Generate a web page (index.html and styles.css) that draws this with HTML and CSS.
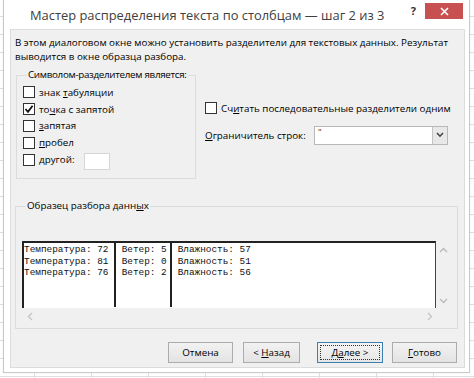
FILE: index.html
```html
<!DOCTYPE html>
<html lang="ru">
<head>
<meta charset="utf-8">
<title>Мастер распределения текста по столбцам</title>
<link rel="stylesheet" href="styles.css">
</head>
<body>
<div class="dialog">
  <div class="titlebar">
    <div class="title">Мастер распределения текста по столбцам — шаг 2 из 3</div>
    <div class="help">?</div>
    <div class="close">
      <svg width="9" height="9" viewBox="0 0 9 9"><path d="M1 1 L8 8 M8 1 L1 8" stroke="#fff" stroke-width="1.6" fill="none"/></svg>
    </div>
  </div>
  <div class="panel">
    <p class="desc">В этом диалоговом окне можно установить разделители для текстовых данных. Результат выводится в окне образца разбора.</p>
    <div class="options">
      <fieldset class="group delims">
        <legend>Символом-разделителем является:</legend>
        <div class="check"><span class="box"></span><span>знак <u>т</u>абуляции</span></div>
        <div class="check"><span class="box on"><svg width="10" height="10" viewBox="0 0 10 10"><path d="M1.5 5 L4 7.8 L8.6 1.8" stroke="#111" stroke-width="1.8" fill="none"/></svg></span><span>то<u>ч</u>ка с запятой</span></div>
        <div class="check"><span class="box"></span><span><u>з</u>апятая</span></div>
        <div class="check"><span class="box"></span><span><u>п</u>робел</span></div>
        <div class="check"><span class="box"></span><span class="other"><u>д</u>ругой:</span><span class="textbox"></span></div>
      </fieldset>
      <div class="side">
        <div class="check consec"><span class="box"></span><span>Сч<u>и</u>тать последовательные разделители одним</span></div>
        <div class="qualifier">
          <span class="qlabel"><u>О</u>граничитель строк:</span>
          <div class="select">
            <span class="val">"</span>
            <span class="arrow"><svg width="8" height="6" viewBox="0 0 8 6"><path d="M1 1 L4 4.2 L7 1" stroke="#444" stroke-width="1.6" fill="none"/></svg></span>
          </div>
        </div>
      </div>
    </div>
    <fieldset class="group sample">
      <legend>Образец разбора данн<u>ы</u>х</legend>
      <div class="preview">
        <div class="data">
          <div class="col c1">Температура: 72
Температура: 81
Температура: 76</div>
          <div class="col c2"> Ветер: 5
 Ветер: 0
 Ветер: 2</div>
          <div class="col c3"> Влажность: 57
 Влажность: 51
 Влажность: 56</div>
        </div>
        <div class="vscroll">
          <svg width="9" height="6" viewBox="0 0 9 6"><path d="M1 5 L4.5 1.5 L8 5" stroke="#b9b9b9" stroke-width="1.3" fill="none"/></svg>
          <svg width="9" height="6" viewBox="0 0 9 6"><path d="M1 1 L4.5 4.5 L8 1" stroke="#b9b9b9" stroke-width="1.3" fill="none"/></svg>
        </div>
      </div>
      <div class="hscroll">
        <svg width="6" height="9" viewBox="0 0 6 9"><path d="M5 1 L1.5 4.5 L5 8" stroke="#c4c4c4" stroke-width="1.3" fill="none"/></svg>
        <svg width="6" height="9" viewBox="0 0 6 9"><path d="M1 1 L4.5 4.5 L1 8" stroke="#c4c4c4" stroke-width="1.3" fill="none"/></svg>
      </div>
    </fieldset>
    <div class="buttons">
      <div class="btn cancel"><span>Отмена</span></div>
      <div class="btn back"><span>&lt; <u>Н</u>азад</span></div>
      <div class="btn next"><span class="focus"><span>Д<u>а</u>лее &gt;</span></span></div>
      <div class="btn finish"><span><u>Г</u>отово</span></div>
    </div>
  </div>
</div>
</body>
</html>
```
FILE: styles.css
```css
* { box-sizing: border-box; }
html, body { margin: 0; padding: 0; }
body {
  width: 474px;
  height: 378px;
  overflow: hidden;
  background-color: #fff;
  background-image:
    repeating-linear-gradient(90deg, transparent 0 34px, #dedede 34px 35px, transparent 35px 57px),
    repeating-linear-gradient(180deg, transparent 0 16px, #dedede 16px 17px, transparent 17px 18px);
  font-family: "Open Sans", "Noto Sans", sans-serif;
  color: #000;
}
u { text-decoration: underline; text-underline-offset: 1px; }

.dialog {
  margin-left: 3px;
  width: 467px;
  height: 373px;
  background: #fff;
  border: 1px solid #c9c9c9;
  border-top: none;
  display: flex;
  flex-direction: column;
  box-shadow: 0 0 2px rgba(0,0,0,0.08);
}
.titlebar {
  height: 29px;
  display: flex;
  align-items: flex-start;
}
.title {
  padding-left: 26px;
  padding-top: 5px;
  font-size: 12.9px;
  line-height: 20px;
  color: #404040;
  flex: 1;
  min-width: 0;
  white-space: nowrap;
  overflow: hidden;
}
.help {
  font-size: 11px;
  font-weight: 700;
  color: #333;
  padding-top: 3px;
  margin-right: 9px;
  line-height: 16px;
}
.close {
  margin-top: 3px;
  margin-right: 6px;
  width: 38px;
  height: 16px;
  background: #c75050;
  display: flex;
  align-items: center;
  justify-content: center;
  flex: none;
}

.panel {
  margin-left: 6px;
  width: 455px;
  height: 339px;
  background: #f0f0f0;
  border: 1px solid #dcdcdc;
  font-size: 9.8px;
}
.desc {
  margin: 6px 0 0 4px;
  line-height: 14px;
  width: 445px;
}

.options {
  display: flex;
  margin-top: 4px;
}
fieldset.group {
  border: 1px solid #dcdcdc;
  margin: 0;
  padding: 0;
  min-width: 0;
}
fieldset.group legend {
  padding: 0 1px;
  margin-left: 4px;
  line-height: 14px;
  color: #000;
  white-space: nowrap;
}
.delims legend { letter-spacing: -0.3px; }
.delims {
  margin-left: 5px !important;
  width: 180px;
  height: 111px;
  padding: 2px 0 0 6px !important;
}
.check {
  display: flex;
  align-items: center;
  height: 16.8px;
  white-space: nowrap;
}
.box {
  width: 12px;
  height: 12px;
  border: 1px solid #333;
  background: #fff;
  margin-right: 4px;
  display: flex;
  align-items: center;
  justify-content: center;
  flex: none;
}
.other { margin-right: 10px; }
.textbox {
  width: 26px;
  height: 17px;
  background: #fff;
  border: 1px solid #d6d6d6;
  margin-top: 3px;
}

.side {
  margin-left: 9px;
  padding-top: 32px;
  display: flex;
  flex-direction: column;
}
.qualifier {
  display: flex;
  align-items: center;
  margin-top: 9px;
}
.qlabel { width: 109px; white-space: nowrap; }
.select {
  width: 134px;
  height: 19px;
  background: #fff;
  border: 1px solid #b8b8b8;
  display: flex;
}
.val {
  flex: 1;
  padding-left: 3px;
  line-height: 12px;
  font-size: 9px;
  color: #333;
}
.arrow {
  width: 15px;
  background: #e8e8e8;
  border-left: 1px solid #c4c4c4;
  display: flex;
  align-items: center;
  justify-content: center;
}

.sample {
  margin: 20px 0 0 4px !important;
  width: 443px;
  height: 130px;
  padding: 28px 0 0 6px !important;
}
.preview {
  display: flex;
  height: 67px;
}
.data {
  width: 414px;
  display: flex;
  background: #fff;
  border-top: 2px solid #222;
  border-left: 2px solid #222;
  border-right: 1px solid #444;
  font-family: "Liberation Mono", monospace;
  font-size: 9.4px;
  line-height: 11.6px;
  white-space: pre;
  padding-top: 1px;
  color: #111;
}
.col { height: 100%; margin-top: -1px; padding-top: 1px; }
.c1 { width: 92px; border-right: 2px solid #222; }
.c2 { width: 56px; border-right: 2px solid #222; }
.c3 { flex: 1; }
.vscroll {
  width: 15px;
  display: flex;
  flex-direction: column;
  align-items: center;
  justify-content: space-between;
  padding: 6px 0 4px;
}
.hscroll {
  width: 415px;
  height: 17px;
  display: flex;
  align-items: center;
  justify-content: space-between;
  padding: 0 4px 0 5px;
}

.buttons {
  display: flex;
  margin-top: 13px;
  padding-left: 157px;
}
.btn {
  height: 21px;
  width: 65px;
  border: 1px solid #acacac;
  background: linear-gradient(#f2f2f2, #e3e3e3);
  display: flex;
  align-items: center;
  justify-content: center;
  white-space: nowrap;
  margin-right: 9px;
}
.cancel { margin-right: 10px; }
.back { width: 57px; margin-right: 17px; }
.next {
  width: 66px;
  border-color: #3c7fb1;
  background: linear-gradient(#f4f4f4, #e6e6e6);
  padding: 2px;
}
.focus {
  width: 100%;
  height: 100%;
  border: 1px dotted #333;
  display: flex;
  align-items: center;
  justify-content: center;
}
.finish { margin-right: 0; }
```
